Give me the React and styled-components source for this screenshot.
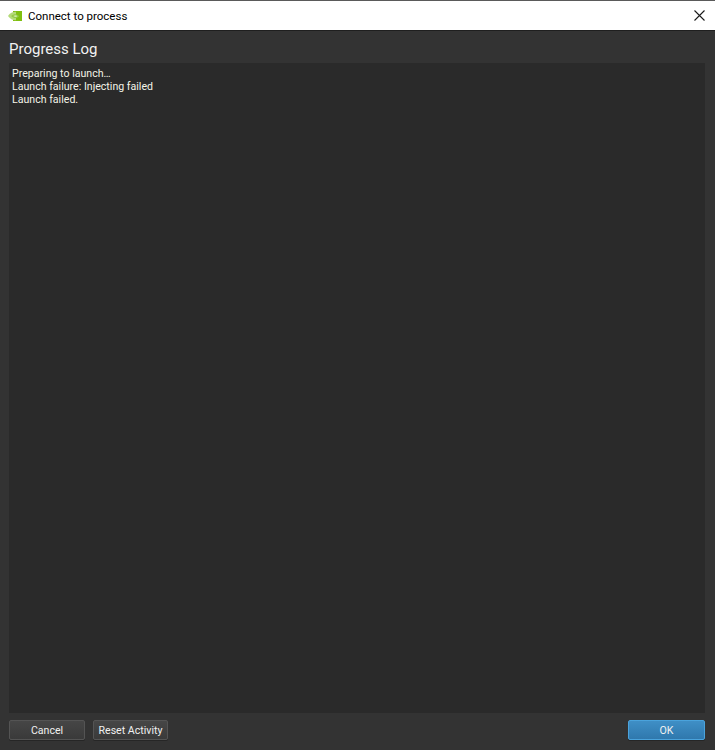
import React from 'react';
import styled, { createGlobalStyle } from 'styled-components';

const Global = createGlobalStyle`
  html, body {
    margin: 0;
    padding: 0;
    background: #333333;
  }
  * {
    box-sizing: border-box;
  }
`;

const NvidiaLogo = () => (
  <svg width="14" height="10" viewBox="0 0 14 10">
    <rect x="5" y="0" width="9" height="10" fill="#7fbf10" />
    <path d="M0 5 C2 2 5 0.6 8 0.8 L8 9.2 C5 9.4 2 8 0 5Z" fill="#b4da78" />
    <path d="M3.2 5 C4.4 3.5 6.4 3 8 3.2 C9.6 3.6 10.6 4.5 11.2 5.3 C10 6.4 9 7 8 7.1 C6.2 7.2 4.4 6.4 3.2 5Z" fill="#93ca44" />
    <path d="M5.4 5 C6.2 4.3 7.2 4.1 8 4.3 C8.8 4.6 9.2 5 9.4 5.3 C8.8 5.8 8.4 6 8 6 C7 6 6 5.6 5.4 5Z" fill="#cfe9a6" />
  </svg>
);

const CloseIcon = () => (
  <svg width="11" height="11" viewBox="0 0 11 11">
    <path d="M0.5 0.5 L10.5 10.5 M10.5 0.5 L0.5 10.5" stroke="#1a1a1a" strokeWidth="1.1" fill="none" />
  </svg>
);

const App = () => {
  return (
    <Window>
      <Global />
      <TitleBar>
        <TitleLeft>
          <NvidiaLogo />
          <TitleText>Connect to process</TitleText>
        </TitleLeft>
        <CloseButton>
          <CloseIcon />
        </CloseButton>
      </TitleBar>
      <Body>
        <Heading>Progress Log</Heading>
        <LogPanel>
          <LogLine>Preparing to launch…</LogLine>
          <LogLine>Launch failure: Injecting failed</LogLine>
          <LogLine>Launch failed.</LogLine>
        </LogPanel>
        <Footer>
          <FooterGroup>
            <Button $width={76}>Cancel</Button>
            <Button $width={75}>Reset Activity</Button>
          </FooterGroup>
          <Button $primary $width={77}>OK</Button>
        </Footer>
      </Body>
    </Window>
  );
};

const Window = styled.div`
  width: 715px;
  height: 750px;
  display: flex;
  flex-direction: column;
  background: #333333;
  font-family: Roboto, "Open Sans", sans-serif;
  overflow: hidden;
`;

const TitleBar = styled.div`
  height: 31px;
  flex: none;
  display: flex;
  align-items: center;
  justify-content: space-between;
  background: #ffffff;
  border-top: 1px solid #5a5a5a;
  border-bottom: 1px solid #1f1f1f;
  padding: 0 10px 0 8px;
`;

const TitleLeft = styled.div`
  display: flex;
  align-items: center;
  gap: 6px;
`;

const TitleText = styled.span`
  font-size: 11.5px;
  color: #000000;
`;

const CloseButton = styled.div`
  display: flex;
`;

const Body = styled.div`
  flex: 1;
  min-height: 0;
  display: flex;
  flex-direction: column;
  padding: 0 10px 10px 9px;
`;

const Heading = styled.div`
  height: 32px;
  flex: none;
  display: flex;
  align-items: center;
  padding-top: 4px;
  font-size: 15px;
  color: #f2f2f2;
`;

const LogPanel = styled.div`
  flex: 1;
  min-height: 0;
  background: #2a2a2a;
  padding: 4px 3px;
`;

const LogLine = styled.div`
  font-size: 10.6px;
  line-height: 13px;
  color: #f4f4e8;
`;

const Footer = styled.div`
  flex: none;
  height: 27px;
  display: flex;
  align-items: flex-end;
  justify-content: space-between;
`;

const FooterGroup = styled.div`
  display: flex;
  gap: 8px;
`;

const Button = styled.div`
  width: ${(p) => p.$width}px;
  height: 20px;
  display: flex;
  align-items: center;
  justify-content: center;
  border-radius: 2px;
  font-size: 10.6px;
  white-space: nowrap;
  color: #f0f0f0;
  background: ${(p) => (p.$primary ? 'linear-gradient(#3f8fc6, #2f78ad)' : 'linear-gradient(#464646, #3a3a3a)')};
  border: 1px solid ${(p) => (p.$primary ? '#4aa3dc' : '#545454')};
  box-shadow: 0 1px 0 #262626;
`;

export default App;
